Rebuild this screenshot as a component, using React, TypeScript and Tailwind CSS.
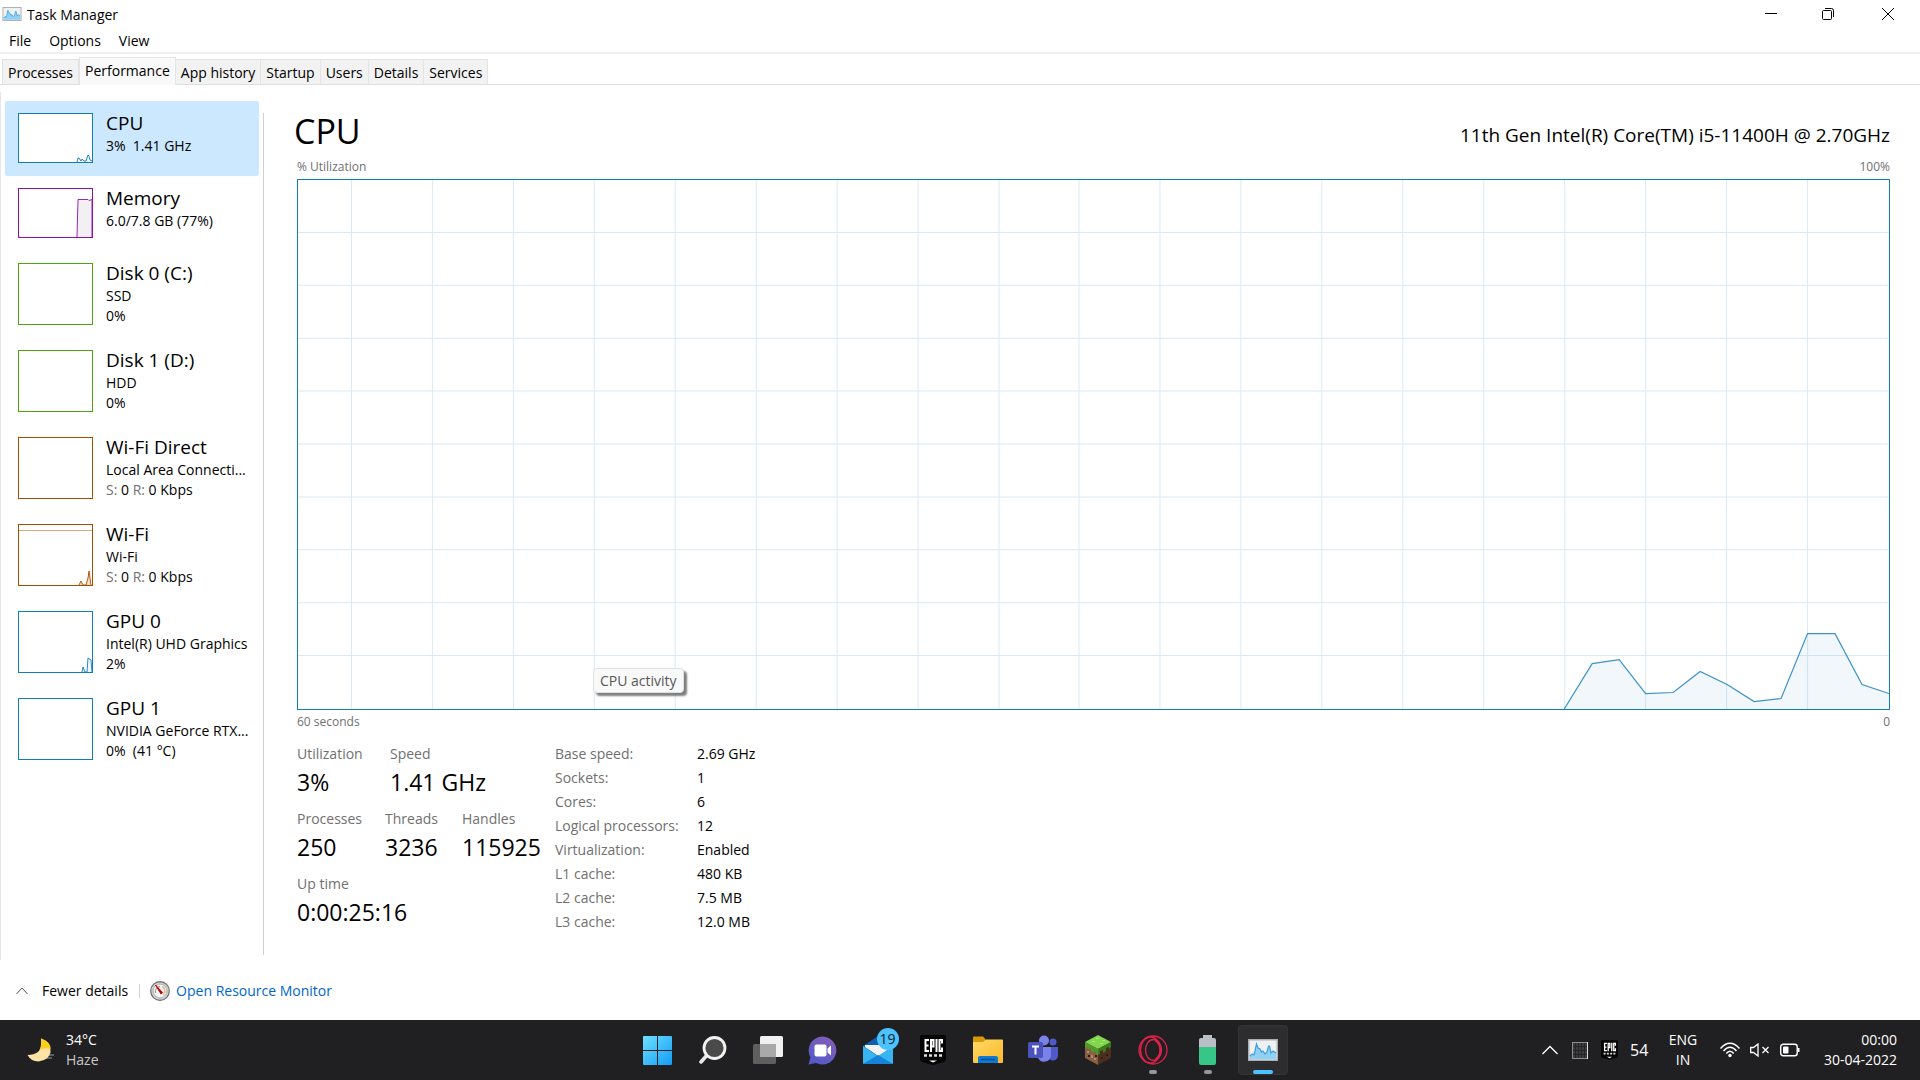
import type { ReactNode } from "react";

type Graph = {
  stroke: string;
  fill: string;
  line?: string;
  cap?: string;
};

type Device = {
  name: string;
  lines: ReactNode[];
  graph: Graph;
};

const BLUE = { stroke: "#117dbb", fill: "#f1f6fa" };
const PURPLE = { stroke: "#8b12ae", fill: "#f2f0f2" };
const GREEN = { stroke: "#4da60c", fill: "#eff7e9" };
const ORANGE = { stroke: "#a74f01", fill: "#f3dcc8" };

const netSpeed = (
  <>
    <span className="text-[#707070]">S:</span> 0 <span className="text-[#707070]">R:</span> 0 Kbps
  </>
);

const devices: Device[] = [
  {
    name: "CPU",
    lines: ["3%  1.41 GHz"],
    graph: { ...BLUE, line: "M59 49L60 45L61 45L63 48L64 46L66 48L68 48L70 42L71 43L72 47L74 48" },
  },
  {
    name: "Memory",
    lines: ["6.0/7.8 GB (77%)"],
    graph: { ...PURPLE, line: "M59 49L60 11.5L70 11.5L71 12.5L74 11.5L74 49" },
  },
  { name: "Disk 0 (C:)", lines: ["SSD", "0%"], graph: GREEN },
  { name: "Disk 1 (D:)", lines: ["HDD", "0%"], graph: GREEN },
  { name: "Wi-Fi Direct", lines: ["Local Area Connecti...", netSpeed], graph: ORANGE },
  {
    name: "Wi-Fi",
    lines: ["Wi-Fi", netSpeed],
    graph: { ...ORANGE, line: "M61 61L63 57L65 61L68 61L70 54L71 47L73 61", cap: "M1 6.5H74" },
  },
  {
    name: "GPU 0",
    lines: ["Intel(R) UHD Graphics", "2%"],
    graph: { ...BLUE, line: "M64 61L65 56L67 61L69 61L70 47L73 49L74 61" },
  },
  { name: "GPU 1", lines: ["NVIDIA GeForce RTX...", "0%  (41 °C)"], graph: BLUE },
];

const tabs = ["Processes", "Performance", "App history", "Startup", "Users", "Details", "Services"];

const specs = [
  ["Base speed:", "2.69 GHz"],
  ["Sockets:", "1"],
  ["Cores:", "6"],
  ["Logical processors:", "12"],
  ["Virtualization:", "Enabled"],
  ["L1 cache:", "480 KB"],
  ["L2 cache:", "7.5 MB"],
  ["L3 cache:", "12.0 MB"],
];

// 60 second history, newest sample on the right
const history =
  "M1267 530L1295 484.5L1322 480.5L1348.5 514.5L1376 513.5L1403 492.5L1430 505.5L1457 522.5L1484 519.5L1510.5 454.5L1538 454.5L1565 505.5L1592 514.5";

const gridX = Array.from({ length: 19 }, (_, i) => Math.round(53 + i * 80.94) + 0.5);
const gridY = Array.from({ length: 9 }, (_, i) => 52.5 + i * 53);

function TaskManagerGlyph({ className }: { className: string }) {
  return (
    <svg className={className} viewBox="0 0 30 22" aria-hidden="true">
      <rect x="0.75" y="0.75" width="28.5" height="20.5" fill="#eef1f4" stroke="#a9aeb3" strokeWidth="1.5" />
      <path
        d="M2 17L4 15L6 16L7 12L8.5 5L10 9L12 10L13.5 13L15 12L17 15L19 13L20.5 7L21.5 7L23 14L25 12L28 14V20H2Z"
        fill="#8fd0f7"
      />
      <path
        d="M2 17L4 15L6 16L7 12L8.5 5L10 9L12 10L13.5 13L15 12L17 15L19 13L20.5 7L21.5 7L23 14L25 12L28 14"
        fill="none"
        stroke="#3d9fdc"
        strokeWidth="1.2"
      />
    </svg>
  );
}

function EpicGlyph({ className }: { className: string }) {
  return (
    <svg className={className} viewBox="0 0 26 30" aria-hidden="true">
      <path d="M2 0H24Q26 0 26 2V24Q26 26 24 27L13 30L2 27Q0 26 0 24V2Q0 0 2 0Z" fill="#050505" />
      <g fill="none" stroke="#fff" strokeWidth="2">
        <path d="M9 5H5.500V16H9M5.500 10.500H8.500" />
        <path d="M11 17V5H13.500V11.500H11" />
        <path d="M16.500 4V17" />
        <path d="M22 8.500V5H19.500V16H22V12.500" />
      </g>
      <path d="M4 20.500H7M9 20.500H12M14 20.500H17M19 20.500H22" stroke="#ddd" strokeWidth="2.500" />
      <path d="M9 25.500H17L13 27.500Z" fill="#fff" />
    </svg>
  );
}

function TitleBar() {
  return (
    <header className="flex h-7 items-center pl-0.5">
      <TaskManagerGlyph className="h-[14px] w-5" />
      <span className="flex-1 pt-0.5 pl-[5px] text-sm leading-5">Task Manager</span>
      <button aria-label="Minimize" className="flex h-7 w-[58px] items-center justify-center">
        <svg className="size-3" viewBox="0 0 12 12">
          <path d="M0 5.500H12" stroke="#000" />
        </svg>
      </button>
      <button aria-label="Restore" className="flex h-7 w-14 items-center justify-center">
        <svg className="size-3" viewBox="0 0 12 12" fill="none" stroke="#000">
          <rect x="0.500" y="2.500" width="9" height="9" rx="1" />
          <path d="M3 0.500H9.500Q11.500 0.500 11.500 2.500V9" />
        </svg>
      </button>
      <button aria-label="Close" className="flex h-7 w-16 items-center justify-center">
        <svg className="size-3" viewBox="0 0 12 12">
          <path d="M0 0L12 12M12 0L0 12" stroke="#000" />
        </svg>
      </button>
    </header>
  );
}

function MenuBar() {
  return (
    <nav className="flex h-[26px] items-center gap-[18px] border-b-2 border-[#f0f0f0] pt-0.5 pl-[9px] text-sm leading-5">
      <button>File</button>
      <button>Options</button>
      <button>View</button>
    </nav>
  );
}

function Tabs() {
  return (
    <div role="tablist" className="flex h-[31px] items-end border-b border-[#dedede] pl-0.5 text-sm leading-5">
      {tabs.map((tab) =>
        tab === "Performance" ? (
          <button
            key={tab}
            role="tab"
            aria-selected="true"
            className="-mb-px h-[28px] border border-b-0 border-[#e5e5e5] bg-[#f9f9f9] px-[5px] pb-0.5"
          >
            {tab}
          </button>
        ) : (
          <button
            key={tab}
            role="tab"
            aria-selected="false"
            className="h-[25px] border-t border-r border-[#e3e3e3] bg-[#f2f2f2] px-[5px] pt-0.5 first:border-l"
          >
            {tab}
          </button>
        )
      )}
    </div>
  );
}

function DeviceItem({ device, selected }: { device: Device; selected: boolean }) {
  const { name, lines, graph } = device;
  const height = lines.length > 1 ? 62 : 50;
  return (
    <li>
      <button
        className={`flex w-full items-start gap-[13px] rounded-xs px-[13px] pt-3 text-left ${
          lines.length > 1 ? "h-[87px]" : "h-[75px]"
        } ${selected ? "bg-[#cce8ff]" : ""}`}
      >
        <svg className="w-[75px] shrink-0" viewBox={`0 0 75 ${height}`} aria-hidden="true">
          <rect x="0.5" y="0.5" width="74" height={height - 1} fill="#fff" />
          {graph.line && <path d={graph.line} fill={graph.fill} stroke={graph.stroke} strokeWidth="0.9" />}
          {graph.cap && <path d={graph.cap} stroke="#d9a878" />}
          <rect x="0.5" y="0.5" width="74" height={height - 1} fill="none" stroke={graph.stroke} />
        </svg>
        <span className="-mt-px min-w-0 flex-1">
          <span className="mb-0.5 block text-[19px] leading-[22px]">{name}</span>
          {lines.map((line, i) => (
            <span key={i} className="block text-sm leading-5 whitespace-pre">
              {line}
            </span>
          ))}
        </span>
      </button>
    </li>
  );
}

function CpuChart() {
  return (
    <div className="relative min-h-[300px] flex-1 border border-[#117dbb]">
      <svg className="absolute inset-0 size-full" viewBox="0 0 1592 530" preserveAspectRatio="none">
        <path d={gridX.map((x) => `M${x} 0V530`).join("")} stroke="#d9eaf4" vectorEffect="non-scaling-stroke" />
        <path d={gridY.map((y) => `M0 ${y}H1592`).join("")} stroke="#d9eaf4" vectorEffect="non-scaling-stroke" />
        <path d={`${history}V530Z`} fill="#117dbb" fillOpacity="0.06" />
        <path d={history} fill="none" stroke="#3a93c9" strokeWidth="1.2" vectorEffect="non-scaling-stroke" />
      </svg>
      <div
        role="tooltip"
        className="absolute bottom-4 left-[295px] rounded-sm border border-[#e0e0e0] bg-[#f9f9f9] px-1.5 text-sm leading-[23px] text-[#575757] shadow-[3px_3px_2px_rgba(0,0,0,0.5)]"
      >
        CPU activity
      </div>
    </div>
  );
}

function Stat({ label, value, className = "" }: { label: string; value: string; className?: string }) {
  return (
    <div className={className}>
      <dt className="text-sm leading-6 text-[#707070]">{label}</dt>
      <dd className="text-[23px] leading-8">{value}</dd>
    </div>
  );
}

function Performance() {
  return (
    <main className="flex min-w-0 flex-1 flex-col pr-[30px] pl-[30px]">
      <div className="flex items-center justify-between">
        <h1 className="text-[34px] leading-[44px]">CPU</h1>
        <span className="pt-2 text-[19px] leading-7">11th Gen Intel(R) Core(TM) i5-11400H @ 2.70GHz</span>
      </div>
      <div className="flex flex-1 flex-col pl-[3px]">
        <div className="flex justify-between pt-0.5 text-xs leading-6 text-[#707070]">
          <span>% Utilization</span>
          <span>100%</span>
        </div>
        <CpuChart />
        <div className="flex justify-between text-xs leading-6 text-[#707070]">
          <span>60 seconds</span>
          <span>0</span>
        </div>
        <div className="flex pt-2 pb-[26px]">
          <dl className="flex w-[258px] flex-col gap-[9px]">
            <div className="flex">
              <Stat label="Utilization" value="3%" className="w-[93px]" />
              <Stat label="Speed" value="1.41 GHz" />
            </div>
            <div className="flex">
              <Stat label="Processes" value="250" className="w-[88px]" />
              <Stat label="Threads" value="3236" className="w-[77px]" />
              <Stat label="Handles" value="115925" />
            </div>
            <Stat label="Up time" value="0:00:25:16" />
          </dl>
          <table className="self-start text-sm leading-6">
            <tbody>
              {specs.map(([label, value]) => (
                <tr key={label}>
                  <th scope="row" className="w-[142px] text-left font-normal text-[#707070]">
                    {label}
                  </th>
                  <td>{value}</td>
                </tr>
              ))}
            </tbody>
          </table>
        </div>
      </div>
    </main>
  );
}

function StatusBar() {
  return (
    <footer className="flex h-[60px] items-center pt-0.5 pl-4 text-sm leading-5">
      <button className="flex items-center gap-[14px]">
        <svg className="h-2 w-3" viewBox="0 0 12 8" fill="none" stroke="#555">
          <path d="M0.500 7L6 1L11.500 7" />
        </svg>
        Fewer details
      </button>
      <span className="ml-[11px] h-[14px] w-px bg-[#d0d0d0]" />
      <a href="#resource-monitor" className="ml-[10px] flex items-center gap-1.5 text-[#0066cc]">
        <svg className="size-5" viewBox="0 0 20 20" aria-hidden="true">
          <circle cx="10" cy="10" r="9.300" fill="#d5d5d5" stroke="#6c6c6c" strokeWidth="1.200" />
          <circle cx="10" cy="10" r="7" fill="#f7f7f7" stroke="#aaa" />
          <path d="M5.500 12A5 5 0 0 1 10 5.500" fill="none" stroke="#888" />
          <path d="M12 5.500A5 5 0 0 1 13 14" fill="none" stroke="#e8b583" strokeWidth="1.500" />
          <path d="M5.500 4L12.500 11.500L11 13Z" fill="#d40000" stroke="#c00000" />
        </svg>
        Open Resource Monitor
      </a>
    </footer>
  );
}

const apps: { name: string; icon: ReactNode; running?: boolean; active?: boolean }[] = [
  {
    name: "Start",
    icon: (
      <svg className="size-[29px]" viewBox="0 0 29 29">
        <defs>
          <linearGradient id="win" x1="0" y1="0" x2="1" y2="1" gradientUnits="objectBoundingBox">
            <stop offset="0" stopColor="#6fe0ff" />
            <stop offset="1" stopColor="#129cf5" />
          </linearGradient>
        </defs>
        <path d="M1 0H14V14H0V1Q0 0 1 0ZM15 0H28Q29 0 29 1V14H15ZM0 15H14V29H1Q0 29 0 28ZM15 15H29V28Q29 29 28 29H15Z" fill="url(#win)" />
      </svg>
    ),
  },
  {
    name: "Search",
    icon: (
      <svg className="size-[28px]" viewBox="0 0 28 28">
        <path d="M9 18L2 26" stroke="#e8e8e8" strokeWidth="3.500" strokeLinecap="round" />
        <circle cx="15.500" cy="12" r="10.500" fill="#4a4a4a" stroke="#f2f2f2" strokeWidth="2.800" />
      </svg>
    ),
  },
  {
    name: "Task view",
    icon: (
      <svg className="size-[30px]" viewBox="0 0 30 30">
        <rect x="7" y="1" width="23" height="21" rx="1.500" fill="#f1f1f1" />
        <rect x="0" y="9" width="23" height="20" rx="1.500" fill="#6f6f6f" fillOpacity="0.800" />
        <path d="M7 9H23V22H7Z" fill="#a9a9a9" />
      </svg>
    ),
  },
  {
    name: "Chat",
    icon: (
      <svg className="size-[29px]" viewBox="0 0 29 29">
        <defs>
          <linearGradient id="chat" x1="1" y1="0" x2="0.300" y2="1">
            <stop offset="0" stopColor="#8a5fb5" />
            <stop offset="1" stopColor="#5459c9" />
          </linearGradient>
        </defs>
        <path d="M14.500 0.500A14 14 0 1 1 8 27L0.500 28.500L2.500 21.500A14 14 0 0 1 14.500 0.500Z" fill="url(#chat)" />
        <rect x="6.500" y="8.500" width="12" height="12" rx="2" fill="#fff" />
        <path d="M19.500 12.500L23 9.500V19.500L19.500 16.500Z" fill="#fff" />
      </svg>
    ),
  },
  {
    name: "Mail",
    icon: (
      <span className="relative">
        <svg className="h-7 w-[30px]" viewBox="0 0 30 28">
          <path d="M0 10L15 0L30 10V14H0Z" fill="#0f5fae" />
          <path d="M2 9H28V15L15 20L2 11Z" fill="#f2f2f2" />
          <path d="M0 10L15 20L30 10V27Q30 28 29 28H1Q0 28 0 27Z" fill="#37b4f1" />
          <path d="M0 28L15 19L30 28Z" fill="#1683d8" />
        </svg>
        <span className="absolute -top-2 left-[14px] flex size-[22px] items-center justify-center rounded-full bg-[#4cc2ff] text-sm text-[#10212c]">
          19
        </span>
      </span>
    ),
  },
  { name: "Epic Games", icon: <EpicGlyph className="h-[30px] w-[26px]" /> },
  {
    name: "File Explorer",
    icon: (
      <svg className="h-7 w-[30px]" viewBox="0 0 30 28">
        <defs>
          <linearGradient id="folder" x1="0" y1="0" x2="1" y2="1">
            <stop offset="0" stopColor="#ffd965" />
            <stop offset="1" stopColor="#fdb92b" />
          </linearGradient>
        </defs>
        <path d="M0 1.500Q0 0.500 1 0.500H10L13 4V8H0Z" fill="#d99a0a" />
        <path d="M0 6H10L13 3.500H29Q30 3.500 30 4.500V26Q30 27 29 27H1Q0 27 0 26Z" fill="url(#folder)" />
        <path d="M5 27V22Q5 20 7 20H23Q25 20 25 22V27Z" fill="#0f7ad0" />
        <path d="M8 23.500H22" stroke="#0a4f92" strokeWidth="1.500" />
      </svg>
    ),
  },
  {
    name: "Teams",
    icon: (
      <svg className="size-[30px]" viewBox="0 0 30 30">
        <circle cx="25" cy="7" r="3.500" fill="#5059c9" />
        <path d="M20 12H30V20A5 5 0 0 1 20 21Z" fill="#5059c9" />
        <circle cx="16" cy="5.500" r="5" fill="#7b83eb" />
        <path d="M10 12H23V21A7 7 0 0 1 10 23Z" fill="#7b83eb" />
        <rect x="0" y="7" width="15" height="16" rx="1.500" fill="#4b53bc" />
        <path d="M4 11.500H11M7.500 11.500V19.500" stroke="#fff" strokeWidth="2" />
      </svg>
    ),
  },
  {
    name: "Minecraft",
    icon: (
      <svg className="h-[30px] w-[26px]" viewBox="0 0 26 30">
        <path d="M0 7L13 14V30L0 23Z" fill="#8a5f44" />
        <path d="M26 7L13 14V30L26 23Z" fill="#4d2f1f" />
        <path d="M13 0L26 7L13 14L0 7Z" fill="#83d64f" />
        <path d="M0 7L13 14V20L11 19V17L9 16V18L6 16V14L4 13V15L2 13L0 12Z" fill="#4f9a2a" />
        <path d="M26 7L13 14V20L15 19V16L18 15V18L21 16V13L24 12V14L26 12Z" fill="#3c7a1e" />
        <path d="M2 16H4V18H2ZM6 20H8V23H6ZM9 23H11V25H9Z" fill="#b08a70" />
        <path d="M3 20H5V22H3ZM10 20H12V22H10ZM16 22H18V24H16ZM21 19H23V21H21Z" fill="#2f1c12" />
        <path d="M11 3H14V4H11ZM7 6H10V7H7ZM15 8H18V9H15ZM17 5H20V6H17Z" fill="#a6ee72" />
      </svg>
    ),
  },
  {
    name: "Opera GX",
    running: true,
    icon: (
      <svg className="size-[30px]" viewBox="0 0 30 30" fill="none" stroke="#e0224a" strokeWidth="1.300">
        <circle cx="15" cy="15" r="14" />
        <ellipse cx="12.500" cy="15" rx="10" ry="13" />
        <ellipse cx="15.500" cy="15" rx="8" ry="10.500" />
        <path d="M17 5.500Q22 9 22 15T17 24.500" />
      </svg>
    ),
  },
  {
    name: "Battery",
    running: true,
    icon: (
      <svg className="h-[30px] w-[17px]" viewBox="0 0 17 30">
        <path d="M4 0H13V3H15Q17 3 17 5V14H0V5Q0 3 2 3H4Z" fill="#b9bfc4" />
        <path d="M0 12H17V28Q17 30 15 30H2Q0 30 0 28Z" fill="#36c786" />
      </svg>
    ),
  },
  { name: "Task Manager", active: true, icon: <TaskManagerGlyph className="h-[22px] w-[30px]" /> },
];

function Taskbar() {
  return (
    <div className="grid h-[60px] grid-cols-[1fr_auto_1fr] items-center bg-[#202022] text-white">
      <button className="flex items-center gap-3 justify-self-start pl-[27px] text-left text-sm leading-5">
        <svg className="size-[27px]" viewBox="0 0 27 27" aria-hidden="true">
          <path d="M15 18H27M13 21H25M17 15.500H24" stroke="#6d7278" strokeWidth="1.500" />
          <path d="M14 1.500Q24 5 23.500 14T11.500 24.500Q4 24.500 0.500 18Q7 18 11 15T14 1.500Z" fill="#ffe2a6" />
          <path d="M14 1.500Q24 5 23.500 12Q18 10 12.500 13Q15.500 7 14 1.500Z" fill="#fccf1c" />
        </svg>
        <span>
          <span className="block">34°C</span>
          <span className="block text-[#c8c8c8]">Haze</span>
        </span>
      </button>

      <div className="flex gap-[5px]">
        {apps.map((app) => (
          <button
            key={app.name}
            aria-label={app.name}
            className={`relative flex size-[50px] items-center justify-center rounded ${
              app.active ? "border border-[#343436] bg-[#2d2d2f]" : ""
            }`}
          >
            {app.icon}
            {app.running && <span className="absolute bottom-px h-1 w-2 rounded-full bg-[#97979b]" />}
            {app.active && <span className="absolute bottom-0 h-1 w-5 rounded-full bg-[#4cc2ff]" />}
          </button>
        ))}
      </div>

      <div className="flex items-center justify-self-end pr-[23px] text-sm leading-5">
        <button aria-label="Show hidden icons">
          <svg className="h-[10px] w-4" viewBox="0 0 16 10" fill="none" stroke="#fff" strokeWidth="1.300">
            <path d="M0.500 9L8 1.500L15.500 9" />
          </svg>
        </button>
        <svg className="ml-[14px] h-[17px] w-4" viewBox="0 0 16 17" aria-hidden="true">
          <rect x="0.500" y="0.500" width="15" height="16" fill="#3c3c3e" stroke="#8d8d8d" />
          <path d="M3.500 1V16M6.500 1V16M9.500 1V16M12.500 1V16M1 4.500H15M1 8.500H15M1 12.500H15" stroke="#252527" />
          <path d="M15.500 0V17" stroke="#ddd" />
        </svg>
        <EpicGlyph className="ml-[13px] h-5 w-[17px]" />
        <span className="ml-3 w-5 text-base font-medium">54</span>
        <button className="ml-[18px] w-[30px]">
          ENG
          <br />
          IN
        </button>
        <button aria-label="Network, volume and battery" className="ml-[22px] flex items-center gap-[10px]">
          <svg className="h-4 w-5" viewBox="0 0 20 16" fill="none" stroke="#fff" strokeWidth="1.500">
            <path d="M0.500 6.500Q10 -4 19.500 6.500M3.500 9Q10 1.500 16.500 9M6.300 11.500Q10 7 13.700 11.500" />
            <circle cx="10" cy="13.500" r="1.700" fill="#fff" stroke="none" />
          </svg>
          <svg className="h-[14px] w-5" viewBox="0 0 20 14" fill="none" stroke="#fff" strokeWidth="1.300">
            <path d="M0.700 4.500H3.500L8 1V13L3.500 9.500H0.700Z" />
            <path d="M12.500 4L18.500 10M18.500 4L12.500 10" />
          </svg>
          <svg className="h-[14px] w-5" viewBox="0 0 20 14">
            <rect x="0.700" y="1.200" width="16.500" height="11.500" rx="2.500" fill="none" stroke="#fff" strokeWidth="1.400" />
            <rect x="3" y="3.500" width="5.500" height="7" rx="1" fill="#fff" />
            <path d="M18 5H19.500V9H18Z" fill="#fff" />
          </svg>
        </button>
        <button className="ml-[19px] w-[78px] text-right">
          00:00
          <br />
          30-04-2022
        </button>
      </div>
    </div>
  );
}

export default function App() {
  return (
    <div className="flex min-h-screen flex-col bg-white font-['Open_Sans','Noto_Sans',sans-serif] text-black">
      <TitleBar />
      <MenuBar />
      <Tabs />
      <div className="mt-[7px] flex flex-1 border-l border-[#e5e5e5]">
        <ul className="mt-[9px] w-[258px] pl-1">
          {devices.map((device) => (
            <DeviceItem key={device.name} device={device} selected={device.name === "CPU"} />
          ))}
        </ul>
        <div className="mt-[21px] mb-[5px] ml-1 w-px bg-[#d0d0d0]" />
        <div className="flex min-w-0 flex-1 pt-[17px]">
          <Performance />
        </div>
      </div>
      <StatusBar />
      <Taskbar />
    </div>
  );
}
